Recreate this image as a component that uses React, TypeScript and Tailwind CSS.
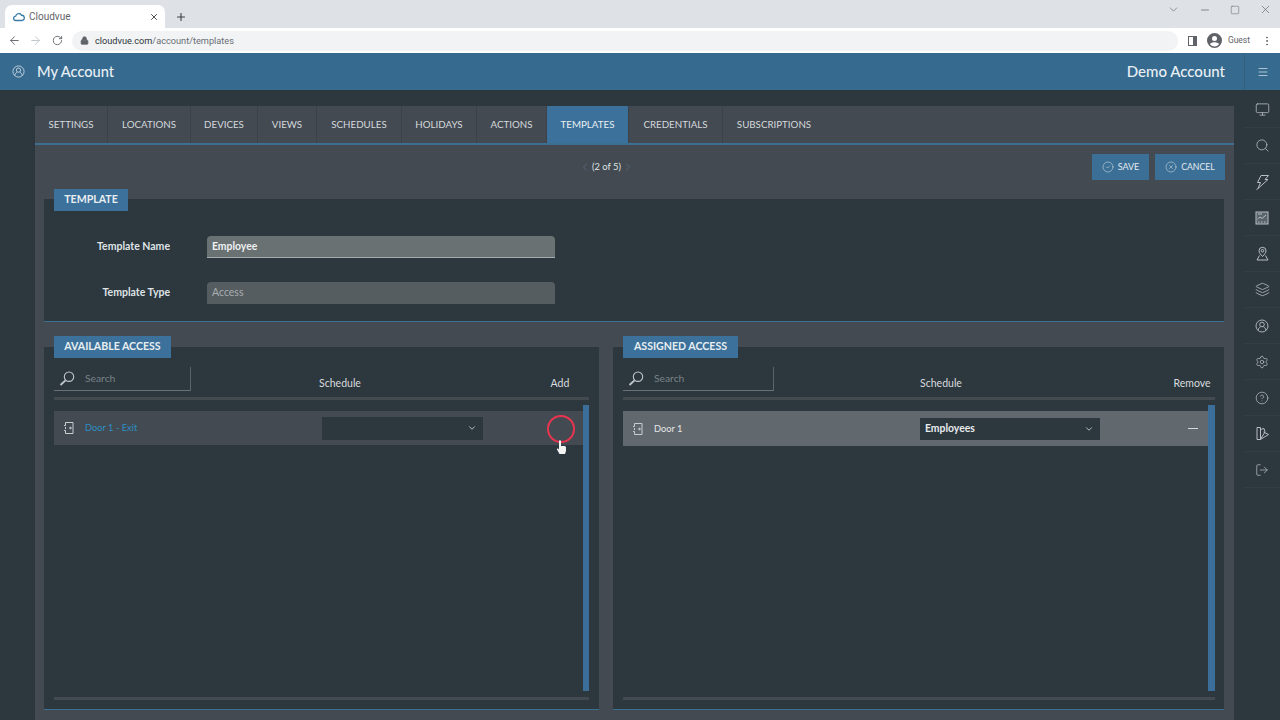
import React from "react";
import {
  ArrowLeft, ArrowRight, RotateCw, Lock, X, Plus, ChevronDown, ChevronLeft, ChevronRight, Minus, Square,
  Menu, Monitor, Search, Layers, Settings, CircleHelp, LogOut, CircleCheck, CircleX, MoreVertical,
} from "lucide-react";

const tabs: [string, string][] = [
  ["SETTINGS", "w-[73px]"],
  ["LOCATIONS", "w-[83px]"],
  ["DEVICES", "w-[67px]"],
  ["VIEWS", "w-[59px]"],
  ["SCHEDULES", "w-[85px]"],
  ["HOLIDAYS", "w-[75px]"],
  ["ACTIONS", "w-[70px]"],
  ["TEMPLATES", "w-[82px]"],
  ["CREDENTIALS", "w-[94px]"],
  ["SUBSCRIPTIONS", "w-[102px]"],
];

function DoorIcon() {
  return (
    <svg width="12" height="14" viewBox="0 0 12 14" fill="none" stroke="#c9cdd0" strokeWidth="1">
      <path d="M2.5 1.5h7.5v11H2.5" />
      <path d="M2.5 1.5v3M2.5 6v2M2.5 9.500v3" />
      <path d="M1 4.500h1.500M1 9.500h1.500" />
      <circle cx="7.500" cy="7" r="0.800" fill="#c9cdd0" />
    </svg>
  );
}

function ChartIcon() {
  return (
    <svg width="14" height="14" viewBox="0 0 14 14" fill="none" stroke="#b9bfc3" strokeWidth="1">
      <rect x="1" y="1" width="12" height="12" fill="#59636a" />
      <path d="M2.500 8l2.500-2 2 1.500 4-3.500" />
      <path d="M3 11h1.500M6 11h1.500M9 11h1.500M3 3h4" />
    </svg>
  );
}

function PinIcon() {
  return (
    <svg width="15" height="15" viewBox="0 0 15 15" fill="none" stroke="#b9bfc3" strokeWidth="1">
      <path d="M7.500 10.500C5.500 8.300 4 6.800 4 4.800a3.500 3.500 0 0 1 7 0c0 2-1.500 3.500-3.500 5.700z" />
      <circle cx="7.500" cy="4.800" r="1.300" />
      <path d="M4.500 9.500 2 14h11l-2.500-4.500" />
    </svg>
  );
}

function SwatchIcon() {
  return (
    <svg width="15" height="15" viewBox="0 0 15 15" fill="none" stroke="#b9bfc3" strokeWidth="1">
      <path d="M2 1.500h3.500v12H2z" />
      <path d="M5.500 3.500 9 2.500l1 3.500L5.500 13" />
      <path d="M8.500 6 13.500 8.500 5.500 13.500" />
    </svg>
  );
}

function BoltIcon() {
  return (
    <svg width="15" height="16" viewBox="0 0 15 16" fill="none" stroke="#b9bfc3" strokeWidth="1">
      <path d="M6 1.500h7.500L10 5.500h3L3 14.500l2.500-6H2.500z" />
      <path d="M3 14.500 1.500 15.500" />
    </svg>
  );
}

function ProfileIcon({ size, color }: { size: number; color: string }) {
  return (
    <svg width={size} height={size} viewBox="0 0 14 14" fill="none" stroke={color} strokeWidth="0.900">
      <circle cx="7" cy="7" r="6" />
      <circle cx="7" cy="5.500" r="2.300" />
      <path d="M3 11.300c.4-2 1.300-3 2.500-3.400M11 11.300c-.4-2-1.300-3-2.500-3.400" />
    </svg>
  );
}

function SearchGlass() {
  return (
    <svg width="16" height="15" viewBox="0 0 16 15" fill="none" stroke="#c2c7ca" strokeWidth="1.100">
      <circle cx="10" cy="5.700" r="4.700" />
      <path d="M6.500 9.300 1.500 14" strokeWidth="1.800" />
    </svg>
  );
}

function Badge({ label, w }: { label: string; w: string }) {
  return (
    <div className={`relative ml-[10px] flex h-[22px] ${w} items-center justify-center bg-[#3b719b] text-[10.600px] font-bold text-[#e9eef1]`}>
      {label}
    </div>
  );
}

function Select({ value, w, h }: { value?: string; w: string; h: string }) {
  return (
    <div className={`flex ${w} ${h} items-center justify-between bg-[#2c373e] pl-[5px] pr-[6px] text-[10.400px] font-bold text-[#e8ebed]`}>
      <span>{value}</span>
      <ChevronDown size={10} strokeWidth={2} className="text-[#d5d9db]" />
    </div>
  );
}

function SearchBox({ w }: { w: string }) {
  return (
    <div className={`flex h-[24px] ${w} items-center border-r border-b border-r-[#5b646a] border-b-[#6a7277] bg-[#2c373e] pl-[5px]`}>
      <SearchGlass />
      <span className="ml-[10px] pt-[1px] text-[10.300px] text-[#7a8388]">Search</span>
    </div>
  );
}

function Label({ text, w, className = "" }: { text: string; w: string; className?: string }) {
  return (
    <div className={`${w} ${className} mt-[8px] text-center text-[10.500px] leading-4 text-[#d8dcde]`}>{text}</div>
  );
}

const sideIcons = [
  <Monitor key="a" size={15} strokeWidth={1.25} />,
  <Search key="b" size={15} strokeWidth={1.25} />,
  <BoltIcon key="c" />,
  <ChartIcon key="d" />,
  <PinIcon key="e" />,
  <Layers key="f" size={15} strokeWidth={1.25} />,
  <ProfileIcon key="g" size={14} color="#b9bfc3" />,
  <Settings key="h" size={14} strokeWidth={1.25} />,
  <CircleHelp key="i" size={14} strokeWidth={1.25} />,
  <SwatchIcon key="j" />,
  <LogOut key="k" size={14} strokeWidth={1.25} />,
];

export default function App() {
  return (
    <div className="flex h-screen w-[1280px] flex-col overflow-hidden bg-[#2c373e] font-['Lato',sans-serif]">
      {/* Browser tab strip */}
      <div className="flex h-[28px] shrink-0 items-end bg-[#dee1e6] pl-[5px]">
        <div className="flex h-[23px] w-[160px] items-center rounded-t-[7px] bg-white pl-[8px] pr-[6px] font-['Roboto',sans-serif] text-[10px] text-[#5f6368]">
          <svg width="12" height="10" viewBox="0 0 12 10" fill="none" stroke="#3d7ca8" strokeWidth="1.300">
            <path d="M3 8.500a2.200 2.200 0 0 1-.3-4.400A3 3 0 0 1 8.400 3.300 2.600 2.600 0 0 1 9 8.500z" />
          </svg>
          <span className="ml-[4px] flex-1">Cloudvue</span>
          <X size={10} strokeWidth={2.2} className="text-[#3c4043]" />
        </div>
        <Plus size={12} strokeWidth={2.2} className="mb-[5px] ml-[10px] text-[#3c4043]" />
        <div className="mb-[12px] ml-auto flex items-center gap-[19px] pr-[8px] text-[#5f6368]">
          <ChevronDown size={13} strokeWidth={1.2} />
          <Minus size={12} strokeWidth={1.4} />
          <Square size={10} strokeWidth={1.2} />
          <X size={13} strokeWidth={1.2} />
        </div>
      </div>
      {/* Browser toolbar */}
      <div className="flex h-[25px] shrink-0 items-center bg-white pl-[8px] pr-[7px] font-['Roboto',sans-serif]">
        <ArrowLeft size={13} strokeWidth={1.7} className="text-[#5f6368]" />
        <ArrowRight size={13} strokeWidth={1.7} className="ml-[8px] text-[#bdc1c6]" />
        <RotateCw size={11} strokeWidth={1.9} className="ml-[10px] text-[#5f6368]" />
        <div className="ml-[9px] flex h-[20px] w-[1109px] items-center rounded-full bg-[#f1f3f4] pl-[8px] text-[9.200px]">
          <Lock size={9} strokeWidth={2} fill="#5f6368" className="text-[#5f6368]" />
          <span className="ml-[6px] text-[#30343a]">cloudvue.com</span>
          <span className="text-[#6a6f75]">/account/templates</span>
        </div>
        <div className="ml-[10px] flex h-[10px] w-[9px] justify-end border border-[#5f6368] bg-white">
          <div className="w-[3px] bg-[#5f6368]" />
        </div>
        <div className="ml-[10px] flex h-[19px] items-center gap-[6px] text-[8.500px] text-[#5f6368]">
          <svg width="15" height="15" viewBox="0 0 15 15" fill="#5f6368">
            <path d="M7.500 0a7.500 7.500 0 1 0 0 15 7.500 7.500 0 0 0 0-15zm0 3a2.500 2.500 0 1 1 0 5 2.500 2.500 0 0 1 0-5zm0 10.500c-2 0-3.700-1-4.600-2.400C3.800 9.800 6 9.300 7.500 9.300s3.700.5 4.600 1.800c-.9 1.400-2.600 2.400-4.600 2.400z" />
          </svg>
          <span>Guest</span>
        </div>
        <MoreVertical size={12} strokeWidth={2} className="ml-[11px] text-[#5f6368]" />
      </div>

      {/* App header */}
      <div className="flex h-[37px] shrink-0 items-center bg-[#376a8f] pl-[12px]">
        <ProfileIcon size={13} color="#d4e0e8" />
        <span className="ml-[12px] text-[14.600px] font-medium text-[#e8f0f5]">My Account</span>
        <span className="ml-auto mr-[19px] text-[15px] font-medium text-[#e8f0f5]">Demo Account</span>
        <div className="flex h-full w-[36px] items-center justify-center border-l border-[#33607f]">
          <Menu size={12} strokeWidth={1.5} className="text-[#d4e0e8]" />
        </div>
      </div>

      <div className="flex min-h-0 flex-1">
        {/* Main */}
        <div className="ml-[35px] mt-[16px] w-[1199px] bg-[#434a52]">
          <div className="box-content flex h-[37px] border-b-2 border-[#3d6f90]">
            {tabs.map(([t, w]) => (
              <div
                key={t}
                className={`flex ${w} items-center justify-center text-[9.750px] ${
                  t === "SUBSCRIPTIONS" ? "" : "border-r border-[#3b4249]"
                } ${t === "TEMPLATES" ? "bg-[#3b719b] text-[#e9eef1]" : "text-[#d5d9dc]"}`}
              >
                {t}
              </div>
            ))}
          </div>

          <div className="flex h-[54px] items-start">
            <div className="ml-[544px] mt-[15px] flex items-center gap-[1px] text-[9.400px] text-[#dfe2e4]">
              <ChevronLeft size={12} strokeWidth={1.2} className="text-[#5f7b90]" />
              <span>(2 of 5)</span>
              <ChevronRight size={12} strokeWidth={1.2} className="text-[#5f7b90]" />
            </div>
            <div className="ml-auto mr-[9px] mt-[9px] flex gap-[6px]">
              <div className="flex h-[26px] w-[57px] items-center justify-center gap-[4px] bg-[#3b6f96] text-[9px] text-[#e3eaef]">
                <CircleCheck size={12} strokeWidth={1} />
                SAVE
              </div>
              <div className="flex h-[26px] w-[70px] items-center justify-center gap-[4px] bg-[#3b6f96] text-[8.700px] text-[#e3eaef]">
                <CircleX size={12} strokeWidth={1} />
                CANCEL
              </div>
            </div>
          </div>

          {/* Template section */}
          <div className="ml-[9px] flow-root h-[123px] w-[1180px] border-b border-[#3d6f90] bg-[#2c373e]">
            <div className="-mt-[10px]">
              <Badge label="TEMPLATE" w="w-[74px]" />
            </div>
            <div className="mt-[25px] flex items-center">
              <div className="w-[126px] text-right text-[10.500px] font-bold text-[#dfe3e5]">Template Name</div>
              <div className="ml-[37px] flex h-[22px] w-[348px] items-center rounded-t-[4px] border-b border-[#a3aaad] bg-[#6a7173] pl-[5px] text-[10.400px] font-bold text-[#eef0f1]">
                Employee
              </div>
            </div>
            <div className="mt-[24px] flex items-center">
              <div className="w-[126px] text-right text-[10.500px] font-bold text-[#dfe3e5]">Template Type</div>
              <div className="ml-[37px] flex h-[22px] w-[348px] items-center rounded-t-[4px] bg-[#565d61] pl-[5px] text-[10.500px] text-[#a7adb0]">
                Access
              </div>
            </div>
          </div>

          <div className="ml-[9px] mt-[25px] flex gap-[14px]">
            {/* Available */}
            <div className="flow-root h-[363px] w-[555px] border-b border-[#3d6f90] bg-[#2c373e]">
              <div className="-mt-[11px]">
                <Badge label="AVAILABLE ACCESS" w="w-[117px]" />
              </div>
              <div className="ml-[10px] mt-[9px] flex w-[535px]">
                <SearchBox w="w-[137px]" />
                <Label text="Schedule" w="w-[298px]" />
                <Label text="Add" w="w-[58px]" className="ml-[42px]" />
              </div>
              <div className="ml-[10px] mt-[6px] h-[3px] w-[535px] bg-[#434a50]" />
              <div className="ml-[10px] mt-[5px] flex h-[286px] w-[535px]">
                <div className="relative mt-[6px] flex h-[34px] w-[529px] items-center bg-[#434a52] pl-[9px]">
                  <DoorIcon />
                  <span className="ml-[10px] w-[237px] text-[9.300px] text-[#2a8fc4]">Door 1 - Exit</span>
                  <Select w="w-[161px]" h="h-[23px]" />
                  <div className="absolute left-[493px] top-[4px] h-[28px] w-[28px] rounded-full border-2 border-[#e8354f]" />
                  <svg className="absolute left-[502px] top-[29px]" width="11" height="14" viewBox="0 0 11 14" fill="#f4f4f4">
                    <path d="M3 1.200a1 1 0 0 1 2 0V6h3.500c1 0 1.500.8 1.500 1.800V11l-1 3H3.500L1 9.500c-.3-.8.500-1.400 1.200-.8L3 9.500z" />
                  </svg>
                </div>
                <div className="h-full w-[6px] bg-[#3b6f9a]" />
              </div>
              <div className="ml-[10px] mt-[6px] h-[3px] w-[535px] bg-[#434a50]" />
            </div>

            {/* Assigned */}
            <div className="flow-root h-[363px] w-[611px] border-b border-[#3d6f90] bg-[#2c373e]">
              <div className="-mt-[11px]">
                <Badge label="ASSIGNED ACCESS" w="w-[115px]" />
              </div>
              <div className="ml-[10px] mt-[9px] flex w-[592px]">
                <SearchBox w="w-[151px]" />
                <Label text="Schedule" w="w-[334px]" />
                <Label text="Remove" w="w-[46px]" className="ml-[61px]" />
              </div>
              <div className="ml-[10px] mt-[6px] h-[3px] w-[592px] bg-[#434a50]" />
              <div className="ml-[10px] mt-[5px] flex h-[286px] w-[592px]">
                <div className="mt-[6px] flex h-[35px] w-[585px] items-center bg-[#62696e] pl-[9px]">
                  <DoorIcon />
                  <span className="ml-[10px] w-[266px] text-[9.300px] text-[#e4e7e9]">Door 1</span>
                  <Select value="Employees" w="w-[180px]" h="h-[22px]" />
                  <div className="ml-[88px] h-[1px] w-[10px] bg-[#d5d9db]" />
                </div>
                <div className="h-full w-[7px] bg-[#3b6f9a]" />
              </div>
              <div className="ml-[10px] mt-[6px] h-[3px] w-[592px] bg-[#434a50]" />
            </div>
          </div>
        </div>

        {/* Sidebar */}
        <div className="ml-[10px] flex w-[36px] flex-col pt-[2px] text-[#b9bfc3]">
          {sideIcons.map((icon, i) => (
            <div key={i} className="flex h-[36px] shrink-0 items-center justify-center border-b border-[#323d44]">
              {icon}
            </div>
          ))}
        </div>
      </div>
    </div>
  );
}
